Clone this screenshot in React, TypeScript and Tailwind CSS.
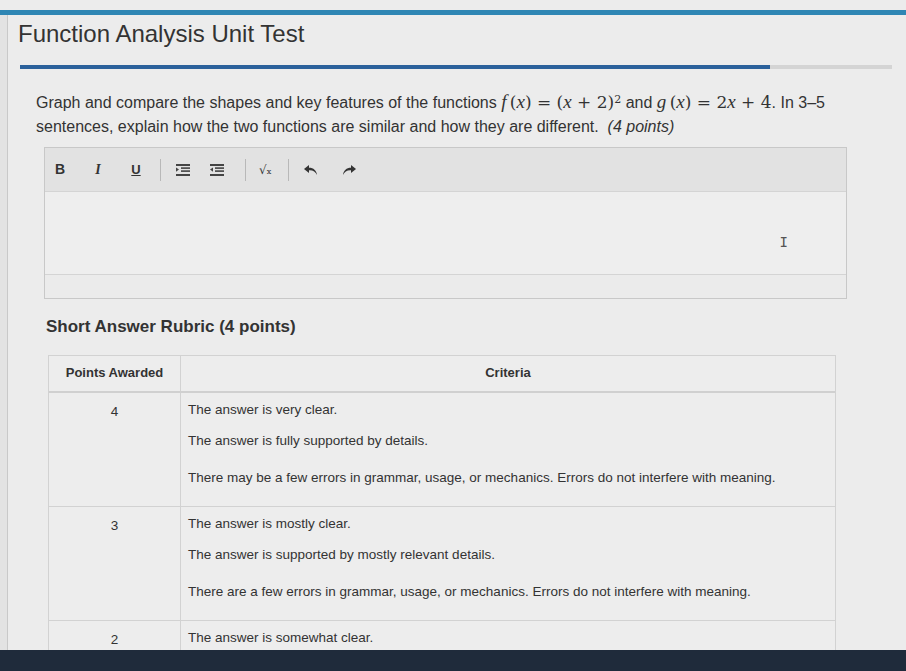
import React from "react";

const M = ({ children }: { children: React.ReactNode }) => (
  <span style={{ fontFamily: '"DejaVu Serif", "Liberation Serif", serif' }} className="text-[17px]">
    {children}
  </span>
);
const V = ({ children }: { children: React.ReactNode }) => (
  <i style={{ fontFamily: '"Liberation Serif", serif' }} className="text-[19px]">{children}</i>
);

function Row({ pts, lines }: { pts: string; lines: string[] }) {
  return (
    <div className="flex border-b border-[#d2d2d2]">
      <div className="w-[132px] shrink-0 border-r border-[#d2d2d2] pt-[9px] text-center text-[13.5px] text-[#333]">{pts}</div>
      <div className="flex-1 pl-[7px] pt-[9px] pb-[21px] flex flex-col text-[13.5px] text-[#333]">
        {lines.map((l, i) => (
          <div key={l} className={"leading-[15px] " + (i === 0 ? "" : i === 1 ? "mt-[16px]" : "mt-[22px]")}>
            {l}
          </div>
        ))}
      </div>
    </div>
  );
}

export default function App() {
  return (
    <div
      className="h-[671px] w-[906px] overflow-hidden bg-[#e6e6e6] flex flex-col"
      style={{ fontFamily: '"Liberation Sans", Arial, sans-serif' }}
    >
      <div className="h-[10px] bg-[#ececec]" />
      <div className="h-[5px] bg-[#2f86b4]" />
      <div className="flex-1 flex min-h-0">
        <div className="w-[8px] shrink-0 bg-[#e3e3e3] border-r border-[#c9c9c9]" />
        <div className="flex-1 bg-[#ececec] flex flex-col min-h-0">
          <div className="pl-[10px] pt-[5px] text-[24px] text-[#333] leading-[28px]">Function Analysis Unit Test</div>
          <div className="mt-[17px] ml-[12px] mr-[14px] h-[4px] bg-[#d4d4d4] flex">
            <div className="w-[750px] bg-[#2b619b]" />
          </div>
          <div className="pl-[28px] pt-[21px] text-[16px] text-[#333] leading-[24px]">
            <div>
              Graph and compare the shapes and key features of the functions{" "}
              <M>
                <V>f</V>&thinsp;(<V>x</V>) = (<V>x</V> + 2)<sup className="text-[11px]">2</sup>
              </M>{" "}
              and{" "}
              <M>
                <V>g</V>&thinsp;(<V>x</V>) = 2<V>x</V> + 4
              </M>
              . In 3–5
            </div>
            <div>
              sentences, explain how the two functions are similar and how they are different.&nbsp;{" "}
              <i>(4 points)</i>
            </div>
          </div>
          <div className="ml-[36px] mr-[59px] mt-[8px] border border-[#c8c8c8] bg-[#eeeeee]">
            <div className="h-[44px] bg-[#e2e2e2] border-b border-[#d4d4d4] flex items-center text-[#333] pl-[2px]">
              <span className="w-[26px] text-center font-bold text-[14px]">B</span>
              <span className="ml-[12px] w-[26px] text-center italic font-bold text-[14px]" style={{ fontFamily: '"Liberation Serif", serif' }}>I</span>
              <span className="ml-[12px] w-[26px] text-center text-[13px] font-bold underline">U</span>
              <span className="ml-[11px] h-[22px] w-px bg-[#b8b8b8]" />
              <svg className="ml-[15px]" width="14" height="12" viewBox="0 0 14 12">
                <rect x="0" y="0" width="14" height="2" fill="#444" />
                <rect x="5" y="3.3" width="9" height="1.6" fill="#444" />
                <rect x="5" y="6.3" width="9" height="1.6" fill="#444" />
                <rect x="0" y="10" width="14" height="2" fill="#444" />
                <path d="M0 3.5 L3 5.6 L0 7.7 Z" fill="#444" />
              </svg>
              <svg className="ml-[20px]" width="14" height="12" viewBox="0 0 14 12">
                <rect x="0" y="0" width="14" height="2" fill="#444" />
                <rect x="5" y="3.3" width="9" height="1.6" fill="#444" />
                <rect x="5" y="6.3" width="9" height="1.6" fill="#444" />
                <rect x="0" y="10" width="14" height="2" fill="#444" />
                <path d="M3 3.5 L0 5.6 L3 7.7 Z" fill="#444" />
              </svg>
              <span className="ml-[21px] h-[22px] w-px bg-[#b8b8b8]" />
              <span className="ml-[13px] text-[12px]" style={{ fontFamily: '"DejaVu Serif", serif' }}>
                √<span className="text-[8px]">x</span>
              </span>
              <span className="ml-[17px] h-[22px] w-px bg-[#b8b8b8]" />
              <svg className="ml-[15px]" width="14" height="12" viewBox="0 0 14 12">
                <path d="M5 1 L0 5 L5 9 L5 6.2 C9 6 11.5 7.5 13 11 C12.5 6.5 9.5 3.8 5 3.8 Z" fill="#333" />
              </svg>
              <svg className="ml-[24px]" width="14" height="12" viewBox="0 0 14 12">
                <path d="M9 1 L14 5 L9 9 L9 6.2 C5 6 2.5 7.5 1 11 C1.5 6.5 4.5 3.8 9 3.8 Z" fill="#333" />
              </svg>
            </div>
            <div className="h-[82px] relative">
              <span className="absolute right-[58px] top-[40px] text-[#555] text-[14px]" style={{ fontFamily: '"DejaVu Sans Mono", monospace' }}>I</span>
            </div>
            <div className="h-[24px] border-t border-[#d4d4d4] bg-[#ebebeb]" />
          </div>
          <div className="pl-[38px] pt-[15px] text-[17px] font-bold text-[#333]">Short Answer Rubric (4 points)</div>
          <div className="ml-[40px] mr-[70px] mt-[15px] border border-[#d2d2d2] border-b-0 bg-[#ededed] flex-1 min-h-0 overflow-hidden">
            <div className="flex h-[37px] border-b-2 border-[#d0d0d0] text-[13px] font-bold text-[#333]">
              <div className="w-[132px] shrink-0 border-r border-[#d2d2d2] flex items-center justify-center">Points Awarded</div>
              <div className="flex-1 flex items-center justify-center">Criteria</div>
            </div>
            <Row
              pts="4"
              lines={[
                "The answer is very clear.",
                "The answer is fully supported by details.",
                "There may be a few errors in grammar, usage, or mechanics. Errors do not interfere with meaning.",
              ]}
            />
            <Row
              pts="3"
              lines={[
                "The answer is mostly clear.",
                "The answer is supported by mostly relevant details.",
                "There are a few errors in grammar, usage, or mechanics. Errors do not interfere with meaning.",
              ]}
            />
            <Row pts="2" lines={["The answer is somewhat clear."]} />
          </div>
        </div>
      </div>
      <div className="h-[21px] bg-[#1f2b3b] shrink-0" />
    </div>
  );
}
